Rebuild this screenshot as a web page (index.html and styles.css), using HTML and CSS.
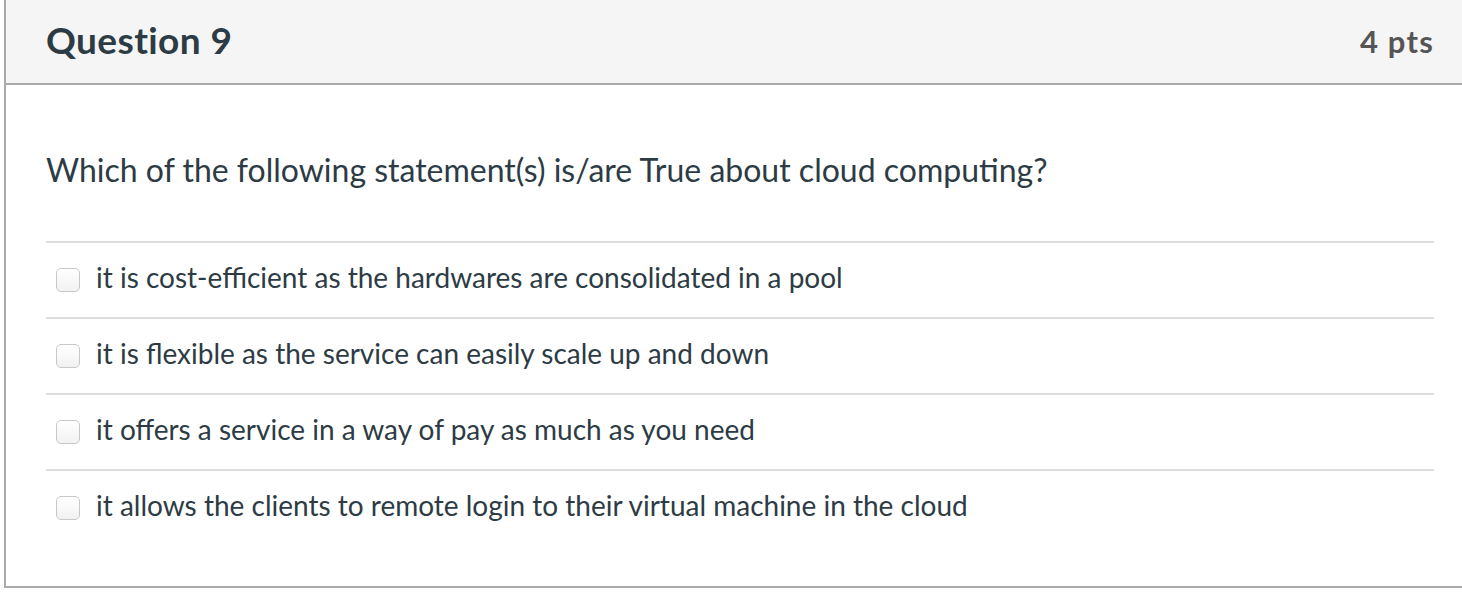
FILE: index.html
```html
<!DOCTYPE html>
<html>
<head>
<meta charset="utf-8">
<link rel="stylesheet" href="styles.css">
</head>
<body>
<div class="card">
  <div class="header">
    <h2 class="title">Question 9</h2>
    <div class="pts">4 pts</div>
  </div>
  <div class="content">
    <div class="question">Which of the following statement(s) is/are True about cloud computing?</div>
    <div class="answers">
      <label class="answer"><span class="box"></span><span class="text">it is cost-efficient as the hardwares are consolidated in a pool</span></label>
      <label class="answer"><span class="box"></span><span class="text">it is flexible as the service can easily scale up and down</span></label>
      <label class="answer"><span class="box"></span><span class="text">it offers a service in a way of pay as much as you need</span></label>
      <label class="answer"><span class="box"></span><span class="text">it allows the clients to remote login to their virtual machine in the cloud</span></label>
    </div>
  </div>
</div>
</body>
</html>
```
FILE: styles.css
```css
html, body {
  margin: 0;
  padding: 0;
  background: #fff;
  overflow: hidden;
}
body {
  font-family: Lato, "Noto Sans", sans-serif;
  color: #2d3b45;
}
.card {
  margin: -2px -20px 0 4px;
  border: 2px solid #aaaaaa;
}
.header {
  height: 85px;
  box-sizing: border-box;
  background: #f5f5f5;
  border-bottom: 2px solid #aaaaaa;
  display: flex;
  align-items: center;
  justify-content: space-between;
  padding: 0 46px 4px 40px;
}
.title {
  margin: 0;
  font-size: 37px;
  letter-spacing: 0.4px;
  font-weight: 700;
  color: #2d3b45;
}
.pts {
  font-size: 31px;
  letter-spacing: 1.2px;
  font-weight: 700;
  color: #555555;
  padding-top: 2px;
}
.content {
  padding: 0 46px 41px 40px;
}
.question {
  font-size: 32px;
  height: 156px;
  box-sizing: border-box;
  padding-top: 12px;
  display: flex;
  align-items: center;
}
.answers {
  border-top: 2px solid #dddddd;
}
.answer {
  display: flex;
  align-items: center;
  height: 74px;
  border-bottom: 2px solid #dddddd;
  padding-left: 10px;
}
.answer:last-child {
  border-bottom: none;
}
.box {
  width: 22px;
  height: 22px;
  border: 1px solid #c8c8c8;
  border-radius: 5px;
  background: linear-gradient(#ffffff, #f2f2f2);
  margin-right: 16px;
  flex-shrink: 0;
}
.text {
  font-size: 28px;
  margin-top: -6px;
}
```
